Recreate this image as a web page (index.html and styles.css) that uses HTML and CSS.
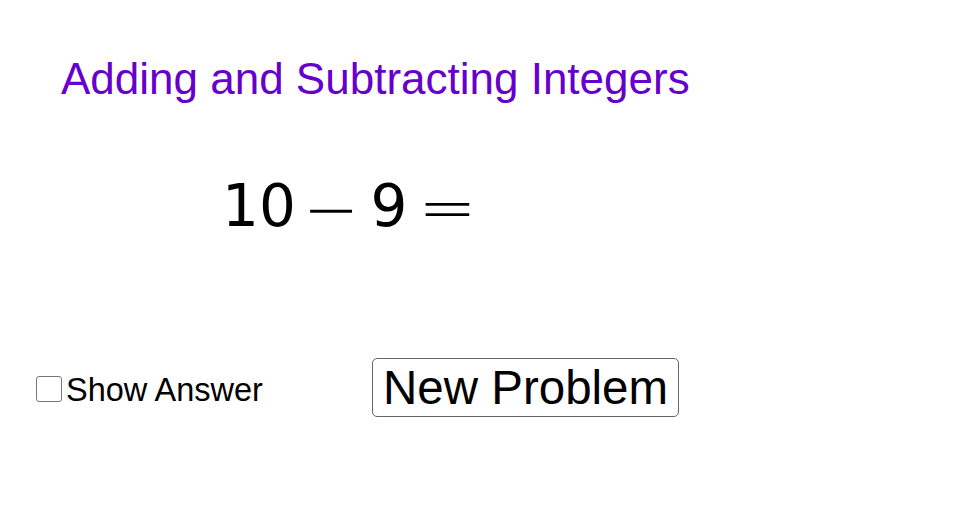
FILE: index.html
```html
<!DOCTYPE html>
<html>
<head>
<meta charset="utf-8">
<link rel="stylesheet" href="styles.css">
</head>
<body>
<main class="app">
  <h1 class="title">Adding and Subtracting Integers</h1>
  <div class="problem"><span class="num">10</span><span class="op minus">−</span><span class="num">9</span><span class="op eq">=</span></div>
  <div class="controls">
    <label class="check"><span class="box"></span><span class="label">Show Answer</span></label>
    <button class="btn">New Problem</button>
  </div>
</main>
</body>
</html>
```
FILE: styles.css
```css
html, body {
  margin: 0;
  padding: 0;
  background: #ffffff;
}
.app {
  width: 956px;
  height: 527px;
  display: flex;
  flex-direction: column;
  font-family: "Liberation Sans", Arial, sans-serif;
}
.title {
  margin: 54px 0 0 61px;
  font-weight: normal;
  font-size: 44px;
  line-height: 50px;
  color: #6600cc;
}
.problem {
  margin: 67px 0 0 222px;
  font-family: "DejaVu Sans", sans-serif;
  font-size: 58px;
  line-height: 70px;
  height: 70px;
  color: #000;
  white-space: nowrap;
}
.op {
  display: inline-block;
  font-family: "Liberation Serif", "Times New Roman", serif;
  font-size: 90px;
  line-height: 0;
}
.minus {
  margin: 0 14px 0 10px;
  vertical-align: -15px;
  transform: scaleY(0.7);
}
.eq {
  margin-left: 15px;
  vertical-align: -14px;
  transform: scale(1.04, 0.58);
}
.controls {
  margin-top: 119px;
  display: flex;
  align-items: center;
}
.check {
  margin-left: 36px;
  display: flex;
  align-items: center;
  gap: 4px;
  width: 300px;
}
.box {
  width: 24px;
  height: 24px;
  border: 1px solid #777;
  border-radius: 3px;
  background: #fff;
}
.label {
  padding-top: 3px;
  font-size: 32.5px;
  color: #000;
}
.btn {
  margin: -2px 0 0 36px;
  height: 59px;
  padding: 0 10px;
  font-family: "Liberation Sans", Arial, sans-serif;
  font-size: 47.5px;
  color: #000;
  background: #fff;
  border: 1px solid #666;
  border-radius: 5px;
}
```
